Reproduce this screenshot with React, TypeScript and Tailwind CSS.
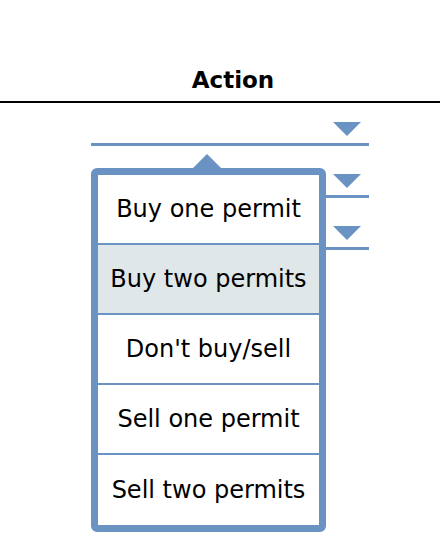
import { useState } from 'react';

const options = [
  'Buy one permit',
  'Buy two permits',
  "Don't buy/sell",
  'Sell one permit',
  'Sell two permits',
];

function SelectLine() {
  return (
    <div className="flex h-[40px] w-[278px] items-end justify-end border-b-[3px] border-[#6a93c4] pr-[8px] pb-[7px]">
      {/* down arrow */}
      <svg width="28" height="14" viewBox="0 0 28 14">
        <path d="M0 0 H28 L14 14 Z" fill="#6a93c4" />
      </svg>
    </div>
  );
}

export default function App() {
  const [active] = useState(1);

  return (
    <div
      className="relative h-[540px] w-[440px] overflow-hidden bg-white text-black"
      style={{ fontFamily: '"DejaVu Sans", Verdana, sans-serif' }}
    >
      <div className="pt-[66px]">
        <div className="border-b-[2px] border-black pb-[7px] pl-[26px] text-center text-[23px] font-bold leading-[28px]">
          Action
        </div>
      </div>

      <div className="flex flex-col gap-[12px] pl-[91px] pt-[3px]">
        <SelectLine />
        <SelectLine />
        <SelectLine />
      </div>

      {/* open dropdown */}
      <div className="absolute left-[91px] top-[154px]">
        <svg width="235" height="14" viewBox="0 0 235 14" className="block">
          <path d="M102 14 L116 0 L130 14 Z" fill="#6a93c4" />
        </svg>
        <div className="flex w-[235px] flex-col divide-y-2 divide-[#6a93c4] rounded-[6px] border-[7px] border-[#6a93c4] bg-white">
          {options.map((opt, i) => (
            <div
              key={opt}
              className={`flex h-[70px] items-center justify-center text-[24px] ${
                i === active ? 'bg-[#e0e7e9]' : 'bg-white'
              }`}
            >
              {opt}
            </div>
          ))}
        </div>
      </div>
    </div>
  );
}
